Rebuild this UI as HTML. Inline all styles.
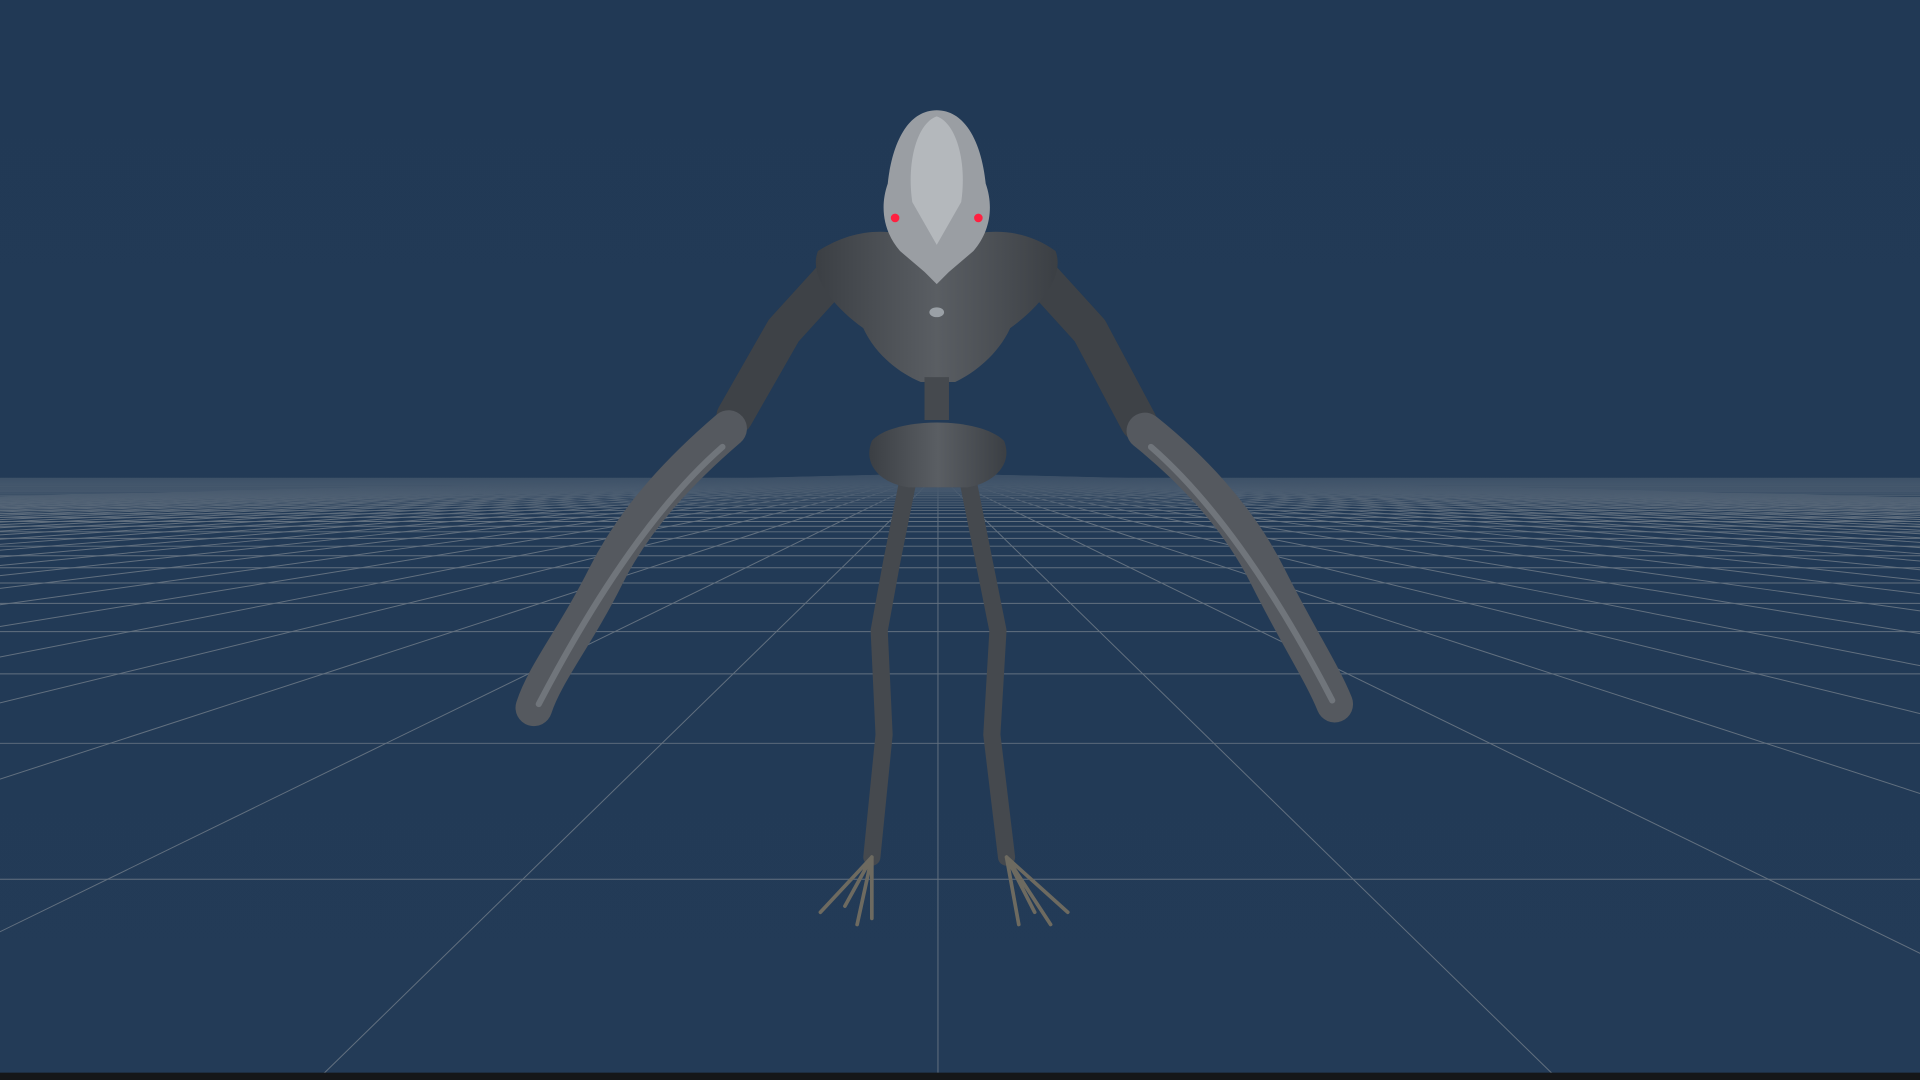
<!DOCTYPE html>
<html><head><style>
html,body{margin:0;padding:0;width:1920px;height:1080px;overflow:hidden;background:#223a56;}
svg{display:block}
</style></head><body>
<svg width="1920" height="1080" viewBox="0 0 1568 882" preserveAspectRatio="none">
<defs>
<linearGradient id="sky" x1="0" y1="0" x2="0" y2="1">
<stop offset="0" stop-color="#213955"/><stop offset="1" stop-color="#233b57"/>
</linearGradient>
<linearGradient id="body" x1="0" y1="0" x2="1" y2="0">
<stop offset="0" stop-color="#3b3f44"/><stop offset="0.5" stop-color="#5a5e63"/><stop offset="1" stop-color="#3b3f44"/>
</linearGradient>
<linearGradient id="fade" x1="0" y1="0" x2="0" y2="1">
<stop offset="0" stop-color="#223a56" stop-opacity="0.85"/><stop offset="1" stop-color="#223a56" stop-opacity="0"/>
</linearGradient>
</defs>
<rect width="1568" height="882" fill="url(#sky)"/>
<g stroke="#8d949b" stroke-width="0.8" opacity="0.6" id="grid"></g>
<rect x="0" y="374" width="1568" height="50" fill="url(#fade)"/>
<rect x="0" y="876" width="1568" height="6" fill="#151719"/>
<g stroke-linecap="round" stroke-linejoin="round" fill="none">
<path d="M690 215 L640 270 L600 340" stroke="#3e4247" stroke-width="30"/>
<path d="M840 215 L890 270 L930 345" stroke="#3e4247" stroke-width="30"/>
<path d="M595 350 C560 380 520 420 495 470 C470 520 445 550 436 578" stroke="#55595f" stroke-width="30"/>
<path d="M935 352 C970 380 1010 420 1035 470 C1060 520 1080 550 1090 575" stroke="#55595f" stroke-width="30"/>
<path d="M590 365 C550 400 500 460 440 575" stroke="#70757b" stroke-width="5"/>
<path d="M940 365 C980 400 1030 460 1088 572" stroke="#70757b" stroke-width="5"/>
<path d="M742 390 L728 460 L718 515 L722 600 L712 700" stroke="#45494e" stroke-width="14"/>
<path d="M790 390 L804 460 L815 515 L810 600 L822 700" stroke="#45494e" stroke-width="14"/>
<path d="M712 700 L690 740 M712 700 L700 755 M712 700 L712 750 M712 700 L670 745" stroke="#6d6a60" stroke-width="3"/>
<path d="M822 700 L845 745 M822 700 L832 755 M822 700 L858 755 M822 700 L872 745" stroke="#6d6a60" stroke-width="3"/>
</g>
<path d="M668 205 C700 185 730 185 765 200 C800 185 835 185 862 205 C870 225 850 250 825 268 C815 290 795 305 780 312 L752 312 C735 305 715 290 705 268 C680 250 660 225 668 205Z" fill="url(#body)"/>
<rect x="755" y="308" width="20" height="35" fill="#45494e"/>
<path d="M712 360 C730 340 800 340 820 360 C828 380 810 395 790 398 L742 398 C720 395 704 380 712 360Z" fill="url(#body)"/>
<path d="M765 90 C790 90 802 120 805 150 C812 170 808 190 795 205 L775 222 L765 232 L755 222 L735 205 C722 190 718 170 725 150 C728 120 740 90 765 90Z" fill="#9a9ea3"/>
<path d="M765 95 C780 100 790 130 785 165 L765 200 L745 165 C740 130 750 100 765 95Z" fill="#b4b8bc"/>
<circle cx="731" cy="178" r="3.5" fill="#ff2040"/>
<circle cx="799" cy="178" r="3.5" fill="#ff2040"/>
<ellipse cx="765" cy="255" rx="6" ry="4" fill="#9aa0a6"/>
</svg>
<script>
(function(){
var g=document.getElementById('grid'),h=375,vx=766,K=717,a=2.09,s='';
for(var n=-1;n<45;n++){var y=h+K/(n+a);if(y>882)continue;s+='<line x1="0" y1="'+y+'" x2="1568" y2="'+y+'"/>';}
for(var m=-40;m<=40;m++){var x2=vx+m*(882-h)*1.0;s+='<line x1="'+vx+'" y1="'+(h+12)+'" x2="'+x2+'" y2="882" transform=""/>';}
g.innerHTML=s;
})();
</script>
</body></html>
